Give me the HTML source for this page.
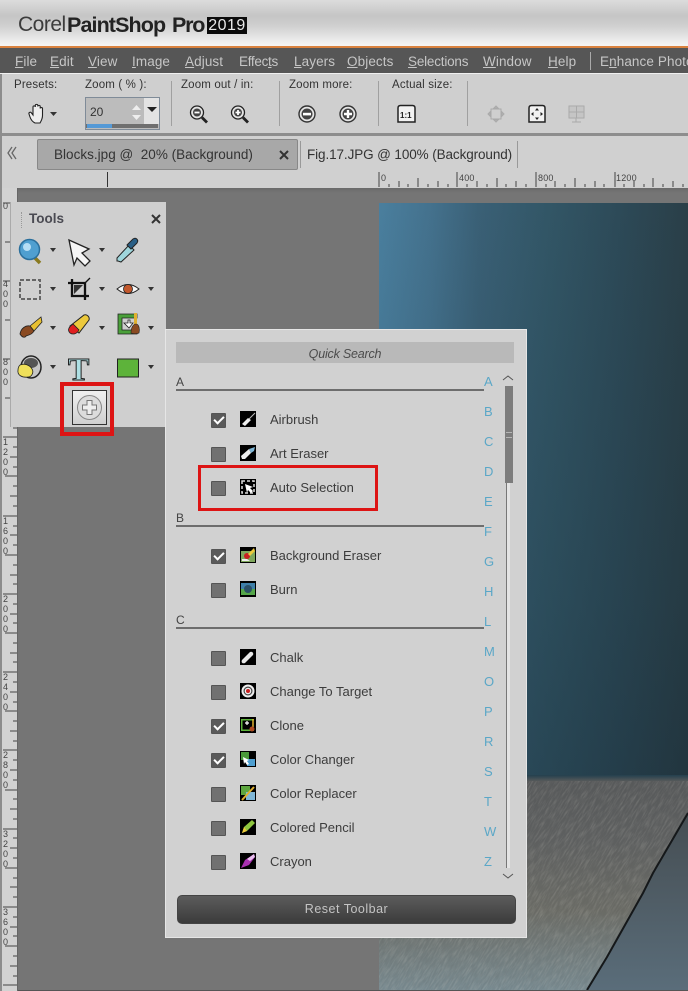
<!DOCTYPE html>
<html><head><meta charset="utf-8"><style>
html,body{margin:0;padding:0;width:688px;height:991px;overflow:hidden;background:#757575}
body{position:relative;font-family:"Liberation Sans",sans-serif;color:#3a3a3a}
.a{position:absolute}
.t{position:absolute;white-space:nowrap;line-height:18px}
.m{color:#c6c6c6;font-size:13.5px;top:53px;letter-spacing:.1px}
.l{font-size:11.5px;top:76px;color:#333;letter-spacing:.15px}
.sep{position:absolute;width:1px;top:81px;height:45px;background:#a0a0a0}
.i{font-size:13px;left:270px;letter-spacing:0;color:#3c3c3c}
.h{font-size:12px;left:176px;color:#444}
.az{font-size:13px;color:#5ba7c7;left:484px}
.c{position:absolute;left:211px;width:13px;height:13px;border:1px solid #555;background:#717171;border-radius:1px}
.c.on{background:#5a5a5a}
.c.on::after{content:"";position:absolute;left:2px;top:2px;width:8px;height:4px;border-left:2px solid #fff;border-bottom:2px solid #fff;transform:rotate(-45deg)}
.ic{position:absolute;left:240px;width:16px;height:16px;background:#000;overflow:hidden}
.ar{position:absolute;width:0;height:0;border-left:3.5px solid transparent;border-right:3.5px solid transparent;border-top:4px solid #333}
.ln{position:absolute;left:176px;width:308px;height:2px;background:#6d6d6d}
svg{position:absolute;overflow:visible}
</style></head><body>

<!-- header -->
<div class="a" style="left:0;top:0;width:688px;height:46px;background:linear-gradient(#dcdcdc 0,#c5c5c5 16px,#d0d0d0 26px,#f4f4f4 45px)"></div>
<div class="t" style="left:18px;top:12px;font-size:21px;line-height:26px;color:#3c3c3c;letter-spacing:-.5px">Corel</div>
<div class="t" style="left:67px;top:12px;font-size:21.5px;line-height:26px;font-weight:bold;color:#222;letter-spacing:-.9px">PaintShop</div>
<div class="t" style="left:172px;top:12px;font-size:21.5px;line-height:26px;font-weight:bold;color:#222;letter-spacing:-1.2px">Pro</div>
<div class="t" style="left:207px;top:17px;width:40px;height:17px;background:#0c0c0c;color:#e8e8e8;font-size:16px;line-height:17px;text-align:center;letter-spacing:.5px">2019</div>
<div class="a" style="left:0;top:46px;width:688px;height:2px;background:#d9823f"></div>

<!-- menu -->
<div class="a" style="left:0;top:48px;width:688px;height:25px;background:#565656"></div>
<div class="a" style="left:0;top:73px;width:688px;height:1px;background:#f0f0f0"></div>
<div class="t m" style="left:15px"><u>F</u>ile</div>
<div class="t m" style="left:50px"><u>E</u>dit</div>
<div class="t m" style="left:88px"><u>V</u>iew</div>
<div class="t m" style="left:132px"><u>I</u>mage</div>
<div class="t m" style="left:185px"><u>A</u>djust</div>
<div class="t m" style="left:239px;letter-spacing:-.3px">Effec<u>t</u>s</div>
<div class="t m" style="left:294px"><u>L</u>ayers</div>
<div class="t m" style="left:347px"><u>O</u>bjects</div>
<div class="t m" style="left:408px;letter-spacing:-.2px"><u>S</u>elections</div>
<div class="t m" style="left:483px"><u>W</u>indow</div>
<div class="t m" style="left:548px"><u>H</u>elp</div>
<div class="a" style="left:590px;top:52px;width:1px;height:18px;background:#aaa"></div>
<div class="t m" style="left:600px">E<u>n</u>hance Photo</div>

<!-- toolbar -->
<div class="a" style="left:0;top:74px;width:688px;height:59px;background:#cfcfcf"></div>
<div class="a" style="left:0;top:133px;width:688px;height:3px;background:#8d8d8d"></div>
<div class="a" style="left:0;top:136px;width:688px;height:52px;background:#d0d0d0"></div>
<div class="a" style="left:0;top:74px;width:2px;height:917px;background:#8c8c8c"></div>
<div class="t l" style="left:14px">Presets:</div>
<div class="t l" style="left:85px">Zoom ( % ):</div>
<div class="t l" style="left:181px">Zoom out / in:</div>
<div class="t l" style="left:289px">Zoom more:</div>
<div class="t l" style="left:392px">Actual size:</div>
<div class="sep" style="left:171px"></div>
<div class="sep" style="left:279px"></div>
<div class="sep" style="left:378px"></div>
<div class="sep" style="left:467px"></div>
<svg style="left:0;top:0" width="688" height="135">
 <path d="M35 123c-2-1-4-3-5-6l-1-3c-.5-1.500 1.500-2.500 2.500-1l1.500 2v-8c0-1.500 2.300-1.500 2.300 0v-1.500c0-1.500 2.500-1.500 2.500 0v1c0-1.500 2.400-1.500 2.400 0v2c0-1.300 2.300-1.300 2.300 0v7c0 3-1 5-2.500 7.500z" fill="#eee" stroke="#222" stroke-width="1.100"/>
 <path d="M50 112h7l-3.500 4z" fill="#333"/>
 <g fill="none" stroke="#222">
  <circle cx="197" cy="112.500" r="6.500" fill="#e4e4e4" stroke-width="1.300"/><path d="M202 117.500l5 5" stroke-width="2.800"/>
  <circle cx="238" cy="112.500" r="6.500" fill="#e4e4e4" stroke-width="1.300"/><path d="M243 117.500l5 5" stroke-width="2.800"/>
 </g>
 <circle cx="197" cy="112.500" r="4" fill="#444"/><circle cx="238" cy="112.500" r="4" fill="#444"/>
 <path d="M194.500 112.500h5" stroke="#fff" stroke-width="1.800"/><path d="M235.500 112.500h5M238 110v5" stroke="#fff" stroke-width="1.800"/>
 <circle cx="307" cy="114" r="8" fill="#e6e6e6" stroke="#333" stroke-width="1.400"/><circle cx="307" cy="114" r="5.500" fill="#444"/><rect x="303" y="112.800" width="8" height="2.600" fill="#fff"/>
 <circle cx="348" cy="114" r="8" fill="#e6e6e6" stroke="#333" stroke-width="1.400"/><circle cx="348" cy="114" r="5.500" fill="#444"/><path d="M344 114h8M348 110v8" stroke="#fff" stroke-width="2.400"/>
 <path d="M398 122v-14q0-2.500 2.500-2.500h12q2.500 0 2.500 2.500v14z" fill="#f2f2f2" stroke="#222" stroke-width="1.500"/>
 <text x="400" y="118" font-size="8" font-weight="bold" fill="#222" font-family="Liberation Sans">1:1</text>
 <g stroke="#aaa" fill="#bbb"><rect x="491" y="109" width="10" height="10" fill="none"/><path d="M496 106l-2 2h4zM496 122l-2-2h4zM488 114l2-2v4zM504 114l-2-2v4z"/></g>
 <path d="M529 122v-14q0-2.500 2.500-2.500h11q2.500 0 2.500 2.500v14z" fill="#f2f2f2" stroke="#222" stroke-width="1.500"/>
 <path d="M537 108l-2 2.500h4zM537 120l-2-2.500h4zM531 114l2.500-2v4zM543 114l-2.500-2v4z" fill="#222"/>
 <g stroke="#aaa" fill="none"><rect x="569" y="106" width="15" height="12" fill="#c5c5c5"/><path d="M576.500 106v12M569 112h15M576 118v4M572 122h9"/></g>
</svg>

<!-- zoom spin -->
<div class="a" style="left:85px;top:97px;width:73px;height:31px;background:#bcbcbc;border:1px solid #7f8b98;box-sizing:content-box"></div>
<div class="a" style="left:144px;top:98px;width:15px;height:26px;background:#e3e3e3"></div>
<div class="a" style="left:86px;top:124px;width:72px;height:4px;background:#6f6f6f"></div>
<div class="a" style="left:87px;top:124px;width:25px;height:4px;background:#5499d6"></div>
<div class="t" style="left:90px;top:103px;font-size:12px;color:#333">20</div>
<svg style="left:0;top:0" width="170" height="130"><path d="M132 110l4.500-5 4.500 5zM132 115l4.500 5 4.500-5z" fill="#eee"/><path d="M147 107h10l-5 5z" fill="#222"/></svg>

<!-- tabs -->
<svg style="left:7px;top:146px" width="10" height="14"><path d="M5 1L1 7l4 6M9 1L5 7l4 6" fill="none" stroke="#666" stroke-width="1.300"/></svg>
<div class="a" style="left:37px;top:139px;width:259px;height:29px;background:#a8a8a8;border:1px solid #888;border-radius:2px"></div>
<div class="t" style="left:54px;top:146px;font-size:13.5px;color:#333;letter-spacing:.02px;white-space:pre">Blocks.jpg @  20% (Background)</div>
<svg style="left:279px;top:150px" width="10" height="10"><path d="M1 1l8 8M9 1l-8 8" stroke="#333" stroke-width="2"/></svg>
<div class="a" style="left:300px;top:141px;width:1px;height:27px;background:#999"></div>
<div class="t" style="left:307px;top:146px;font-size:13.5px;color:#333;letter-spacing:-.1px">Fig.17.JPG @ 100% (Background)</div>
<div class="a" style="left:517px;top:141px;width:1px;height:27px;background:#999"></div>
<div class="a" style="left:107px;top:172px;width:1px;height:15px;background:#333"></div>

<!-- top ruler -->
<svg style="left:0;top:0" width="688" height="188">
 <path d="M379 172v15M389 184v3M399 181v6M408 184v3M418 178v9M428 184v3M438 181v6M448 184v3M457 172v15M467 184v3M477 181v6M487 184v3M497 178v9M506 184v3M516 181v6M526 184v3M536 172v15M546 184v3M555 181v6M565 184v3M575 178v9M585 184v3M595 181v6M604 184v3M615 172v15M624 184v3M634 181v6M644 184v3M653 178v9M663 184v3M673 181v6M683 184v3" stroke="#444" stroke-width="1" fill="none"/>
 <g font-family="Liberation Sans" font-size="9" fill="#444" letter-spacing=".2"><text x="381" y="181">0</text><text x="459" y="181">400</text><text x="538" y="181">800</text><text x="616" y="181">1200</text></g>
</svg>

<!-- canvas -->
<div class="a" style="left:18px;top:188px;width:670px;height:803px;background:linear-gradient(#6a6a6a,#757575 5px)"></div>

<!-- left ruler -->
<div class="a" style="left:2px;top:188px;width:16px;height:803px;background:#d2d2d2;border-right:1px solid #666;box-sizing:border-box"></div>
<svg style="left:0;top:0" width="18" height="991">
 <path d="M3 203h14M13 213h4M10 223h7M13 232h4M5 242h12M13 252h4M10 262h7M13 271h4M3 281h14M13 291h4M10 301h7M13 311h4M5 320h12M13 330h4M10 340h7M13 350h4M3 359h14M13 369h4M10 379h7M13 389h4M5 398h12M13 408h4M10 418h7M13 428h4M3 437h14M13 447h4M10 457h7M13 467h4M5 476h12M13 486h4M10 496h7M13 506h4M3 516h14M13 526h4M10 535h7M13 545h4M5 555h12M13 565h4M10 575h7M13 584h4M3 594h14M13 604h4M10 614h7M13 623h4M5 633h12M13 643h4M10 653h7M13 662h4M3 672h14M13 682h4M10 692h7M13 702h4M5 711h12M13 721h4M10 731h7M13 741h4M3 750h14M13 760h4M10 770h7M13 780h4M5 790h12M13 799h4M10 809h7M13 819h4M3 829h14M13 838h4M10 848h7M13 858h4M5 868h12M13 878h4M10 887h7M13 897h4M3 907h14M13 917h4M10 927h7M13 936h4M5 946h12M13 956h4M10 966h7M13 976h4M3 985h14" stroke="#444" stroke-width="1" fill="none"/>
 <g font-family="Liberation Sans" font-size="9" fill="#444">
  <text x="3" y="209">0</text>
  <text x="3" y="287">4</text><text x="3" y="297">0</text><text x="3" y="307">0</text>
  <text x="3" y="365">8</text><text x="3" y="375">0</text><text x="3" y="385">0</text>
  <text x="3" y="445">1</text><text x="3" y="455">2</text><text x="3" y="465">0</text><text x="3" y="475">0</text>
  <text x="3" y="524">1</text><text x="3" y="534">6</text><text x="3" y="544">0</text><text x="3" y="554">0</text>
  <text x="3" y="602">2</text><text x="3" y="612">0</text><text x="3" y="622">0</text><text x="3" y="632">0</text>
  <text x="3" y="680">2</text><text x="3" y="690">4</text><text x="3" y="700">0</text><text x="3" y="710">0</text>
  <text x="3" y="758">2</text><text x="3" y="768">8</text><text x="3" y="778">0</text><text x="3" y="788">0</text>
  <text x="3" y="837">3</text><text x="3" y="847">2</text><text x="3" y="857">0</text><text x="3" y="867">0</text>
  <text x="3" y="915">3</text><text x="3" y="925">6</text><text x="3" y="935">0</text><text x="3" y="945">0</text>
 </g>
</svg>

<!-- photo -->
<div class="a" style="left:379px;top:203px;width:309px;height:575px;background:linear-gradient(rgba(20,40,50,0) 0,rgba(20,40,50,.22) 400px,rgba(15,30,40,.3) 575px),linear-gradient(90deg,#4a7f9e 0,#44728e 50px,#3a6076 100px,#325666 170px,#2d4a58 240px,#2a3f48 309px)"></div>
<div class="a" style="left:379px;top:775px;width:309px;height:6px;background:linear-gradient(#24404e,#55595a)"></div>
<div class="a" style="left:379px;top:781px;width:309px;height:209px;overflow:hidden;background:linear-gradient(#57595a 0,#5e6060 60px,#6b6c66 130px,#788a90 209px)">
 <svg style="left:0;top:0;overflow:hidden" width="309" height="209" viewBox="0 3 309 209">
  <defs>
   <linearGradient id="bd" x1="0" y1="0" x2="0" y2="1"><stop offset="0" stop-color="#454d52"/><stop offset="1" stop-color="#5a6d7a"/></linearGradient>
   <filter id="gr" x="0" y="0" width="100%" height="100%"><feTurbulence type="fractalNoise" baseFrequency=".09 .6" numOctaves="3" seed="4" stitchTiles="stitch"/><feColorMatrix type="matrix" values="0 0 0 0 .85  0 0 0 0 .82  0 0 0 0 .75  1.800 0 0 0 -.75"/></filter>
   <filter id="gd" x="0" y="0" width="100%" height="100%"><feTurbulence type="fractalNoise" baseFrequency=".12 .7" numOctaves="3" seed="9" stitchTiles="stitch"/><feColorMatrix type="matrix" values="0 0 0 0 .1  0 0 0 0 .1  0 0 0 0 .1  1.800 0 0 0 -.7"/></filter>
   <pattern id="pg" width="400" height="400" patternUnits="userSpaceOnUse" patternTransform="rotate(-58)"><rect width="400" height="400" filter="url(#gr)"/></pattern>
   <pattern id="pd" width="400" height="400" patternUnits="userSpaceOnUse" patternTransform="rotate(-58)"><rect width="400" height="400" filter="url(#gd)"/></pattern>
  </defs>
  <rect x="0" y="3" width="309" height="209" fill="url(#pg)" opacity=".2"/>
  <rect x="0" y="3" width="309" height="209" fill="url(#pd)" opacity=".18"/>
  <path d="M309 34L309 212H209L300 50Z" fill="url(#bd)"/>
  <path d="M309 35L274 95L264 115L228 179L208 212" stroke="#15181a" stroke-width="2" fill="none"/>
 </svg>
</div>
<div class="a" style="left:18px;top:990px;width:670px;height:1px;background:#555"></div>

<!-- tools panel -->
<div class="a" style="left:10px;top:202px;width:156px;height:225px;background:#cfcfcf;border-left:1px solid #aaa;box-sizing:border-box"></div>
<div class="a" style="left:21px;top:212px;width:2px;height:16px;border-left:1px dotted #999"></div>
<div class="t" style="left:29px;top:210px;font-size:13.5px;font-weight:bold;color:#4a4a52">Tools</div>
<svg style="left:151px;top:214px" width="10" height="10"><path d="M1 1l8 8M9 1l-8 8" stroke="#333" stroke-width="2"/></svg>
<svg style="left:0;top:195px" width="170" height="240">
 <!-- magnifier -->
 <path d="M33 61l7 7" stroke="#8a7a20" stroke-width="3.500"/>
 <circle cx="29.500" cy="54.500" r="10" fill="#4f9fd0" stroke="#2a6f9c" stroke-width="1.500"/><circle cx="27" cy="52" r="4" fill="#b5def5"/>
 <!-- arrow -->
 <path d="M69 45l20 9-7 4 8 8-5 5-8-8-3 7z" fill="#f5f5f5" stroke="#222" stroke-width="1.300"/>
 <!-- dropper -->
 <path d="M118 66l-1 0 0-3 12-13 5 5-13 12z" fill="#9fd6dc" stroke="#222"/><path d="M127 50l6-6c3-2 6 1 4 4l-6 6z" fill="#2a5f86" stroke="#222"/>
 <!-- selection -->
 <rect x="20" y="85" width="20" height="19" fill="none" stroke="#666" stroke-width="2" stroke-dasharray="4 2"/>
 <!-- crop -->
 <path d="M72 84v17h17M68 88h17v17" fill="none" stroke="#111" stroke-width="2.300"/><path d="M85 88l5-5" stroke="#111" stroke-width="1.300"/><path d="M74 99V90h9z" fill="#333"/>
 <!-- eye -->
 <path d="M117 94q11-9 22 0q-11 9-22 0z" fill="#f8f8f8" stroke="#222"/><circle cx="128" cy="94" r="4.500" fill="#c2582c" stroke="#222" stroke-width=".8"/>
 <!-- brush -->
 <path d="M30 131l11-9 1 5-8 9z" fill="#e8c030" stroke="#222" stroke-width=".8"/><path d="M20 139c1-6 6-9 10-8l4 5c-2 4-6 4-8 5 0 1-3 3-6-2z" fill="#8a4a22" stroke="#222" stroke-width=".8"/>
 <!-- eraser -->
 <path d="M70 131l14-11c3-1 6 2 5 5l-10 13z" fill="#ecc93c" stroke="#222"/><path d="M69 133c2-3 3-3 4-4l6 6c-2 4-6 5-9 3-1-1-2-3-1-5z" fill="#e02020" stroke="#222" stroke-width=".8"/>
 <!-- clone -->
 <path d="M118 119h19v4h-15v12h15v4h-19z" fill="#4aa03a" stroke="#222" stroke-width=".8"/>
 <path d="M124 128h4v-3h2v3h3l-4 5z" fill="#fff" stroke="#222" stroke-width=".8"/>
 <path d="M134 118h3v12h-3z" fill="#e0b030"/><path d="M131 138c0-5 2-9 5-9s4 5 3 9c-2 1-6 1-8 0z" fill="#8a4a22" stroke="#222" stroke-width=".6"/>
 <!-- fill -->
 <ellipse cx="31" cy="172" rx="10" ry="11" fill="#c7c7c7" stroke="#222" stroke-width="1.500"/><ellipse cx="31" cy="168" rx="7" ry="5" fill="#555"/>
 <path d="M20 170c4-2 10 0 12 4 2 3 0 8-4 8-6 1-11-2-10-7 0-2 1-4 2-5z" fill="#efe05a" stroke="#222" stroke-width=".8"/>
 <!-- T -->
 <text x="68" y="185" font-family="Liberation Serif" font-size="32" font-weight="bold" fill="#aee0e4" stroke="#222" stroke-width="1">T</text>
 <!-- rect -->
 <rect x="117.500" y="164" width="21" height="18" fill="#5db33a" stroke="#222" stroke-width="1"/>
</svg>
<div class="ar" style="left:50px;top:248px"></div><div class="ar" style="left:99px;top:248px"></div>
<div class="ar" style="left:50px;top:287px"></div><div class="ar" style="left:99px;top:287px"></div><div class="ar" style="left:148px;top:287px"></div>
<div class="ar" style="left:50px;top:326px"></div><div class="ar" style="left:99px;top:326px"></div><div class="ar" style="left:148px;top:326px"></div>
<div class="ar" style="left:50px;top:365px"></div><div class="ar" style="left:148px;top:365px"></div>

<!-- plus button -->
<div class="a" style="left:72px;top:390px;width:33px;height:33px;background:linear-gradient(#f0f0f0,#d0d0d0);border:1px solid #333"></div>
<svg style="left:72px;top:390px" width="35" height="35"><circle cx="17.500" cy="17.500" r="12" fill="#dcdcdc" stroke="#888"/><path d="M15 10.500h5v4.500h4.500v5H20v4.500h-5V20h-4.500v-5H15z" fill="#eee" stroke="#777"/></svg>
<div class="a" style="left:60px;top:382px;width:54px;height:54px;border:4px solid #dd1414;box-sizing:border-box"></div>

<!-- popup -->
<div class="a" style="left:165px;top:329px;width:362px;height:609px;background:#d1d1d1;border:1px solid #e6e6e6;box-sizing:border-box"></div>
<div class="a" style="left:176px;top:342px;width:338px;height:21px;background:#b9b9b9"></div>
<div class="t" style="left:176px;top:345px;width:338px;text-align:center;font-size:12.5px;font-style:italic;color:#4c4c4c;letter-spacing:-.2px">Quick Search</div>

<div class="t h" style="top:373px">A</div><div class="ln" style="top:389px"></div>
<div class="t h" style="top:509px">B</div><div class="ln" style="top:525px"></div>
<div class="t h" style="top:611px">C</div><div class="ln" style="top:627px"></div>

<div class="c on" style="top:413px"></div><div class="t i" style="top:411px">Airbrush</div>
<div class="c" style="top:447px"></div><div class="t i" style="top:445px">Art Eraser</div>
<div class="c" style="top:481px"></div><div class="t i" style="top:479px">Auto Selection</div>
<div class="c on" style="top:549px"></div><div class="t i" style="top:547px">Background Eraser</div>
<div class="c" style="top:583px"></div><div class="t i" style="top:581px">Burn</div>
<div class="c" style="top:651px"></div><div class="t i" style="top:649px">Chalk</div>
<div class="c" style="top:685px"></div><div class="t i" style="top:683px">Change To Target</div>
<div class="c on" style="top:719px"></div><div class="t i" style="top:717px">Clone</div>
<div class="c on" style="top:753px"></div><div class="t i" style="top:751px">Color Changer</div>
<div class="c" style="top:787px"></div><div class="t i" style="top:785px">Color Replacer</div>
<div class="c" style="top:821px"></div><div class="t i" style="top:819px">Colored Pencil</div>
<div class="c" style="top:855px"></div><div class="t i" style="top:853px">Crayon</div>

<!-- list icons -->
<div class="ic" style="top:411px"><svg width="16" height="16"><path d="M2 13l6-6 3 2-6 6z" fill="#eee"/><path d="M9 8l6-6" stroke="#bbb"/></svg></div>
<div class="ic" style="top:445px"><svg width="16" height="16"><path d="M1 11l8-7 2 4-6 6H2z" fill="#eee"/><path d="M9 4l6-2-1 4-3 2z" fill="#7fb6d6"/></svg></div>
<div class="ic" style="top:479px"><svg width="16" height="16"><rect x="2" y="2" width="12" height="12" fill="none" stroke="#ddd" stroke-width="1.500" stroke-dasharray="3 2"/><path d="M5 5l8 3-3 1 3 3-2 2-3-3-1 3z" fill="#fff"/></svg></div>
<div class="ic" style="top:547px"><svg width="16" height="16"><rect x="1" y="4" width="14" height="11" fill="#7fa75c"/><circle cx="7" cy="9" r="3" fill="#c92020"/><path d="M8 7l6-6 1 3-5 5z" fill="#ecc93c"/><path d="M2 12h5l3 2H2z" fill="#eee"/></svg></div>
<div class="ic" style="top:581px"><svg width="16" height="16"><rect x="1" y="2" width="14" height="6" fill="#3f7fa8"/><rect x="1" y="8" width="14" height="6" fill="#55a64a"/><circle cx="8" cy="8" r="4" fill="#2b4f66"/></svg></div>
<div class="ic" style="top:649px"><svg width="16" height="16"><path d="M2 11l8-8c2-1 4 1 3 3l-8 8c-3 1-4-1-3-3z" fill="#e8e8e8"/></svg></div>
<div class="ic" style="top:683px"><svg width="16" height="16"><circle cx="8" cy="8" r="6.500" fill="#eee"/><circle cx="8" cy="8" r="4.500" fill="#444"/><circle cx="8" cy="8" r="3.300" fill="#eee"/><circle cx="8" cy="8" r="2" fill="#c92020"/></svg></div>
<div class="ic" style="top:717px"><svg width="16" height="16"><path d="M1 2h13v1.500H2.500v9H14V14H1z" fill="#5db33a"/><path d="M5 6h4M7 4v4" stroke="#fff" stroke-width="1.200"/><path d="M13 2v8" stroke="#e0b030" stroke-width="1.500"/><circle cx="12" cy="12" r="2.500" fill="#b04a22"/></svg></div>
<div class="ic" style="top:751px"><svg width="16" height="16"><rect x="1" y="1" width="8" height="8" fill="#4a9a3a"/><rect x="7" y="8" width="8" height="7" fill="#4f9fd0"/><path d="M3 6l6 3-2 1 2 3-2 1-2-3-1 2z" fill="#fff"/></svg></div>
<div class="ic" style="top:785px"><svg width="16" height="16"><rect x="1" y="1" width="9" height="9" fill="#5da63f"/><rect x="6" y="7" width="9" height="8" fill="#7fb6d6"/><path d="M2 15L14 2" stroke="#e0b030" stroke-width="2"/></svg></div>
<div class="ic" style="top:819px"><svg width="16" height="16"><path d="M2 14l2-6 8-7 3 3-8 8z" fill="#8ec63f"/><path d="M2 14l2-6 3 4z" fill="#ecc93c"/></svg></div>
<div class="ic" style="top:853px"><svg width="16" height="16"><path d="M1 15l4-8 9-6 1 3-6 8z" fill="#a830b0"/><path d="M7 6l7-5 1 3-5 4z" fill="#e8c0ee"/></svg></div>

<!-- alphabet -->
<div class="t az" style="top:373px">A</div><div class="t az" style="top:403px">B</div><div class="t az" style="top:433px">C</div><div class="t az" style="top:463px">D</div><div class="t az" style="top:493px">E</div><div class="t az" style="top:523px">F</div><div class="t az" style="top:553px">G</div><div class="t az" style="top:583px">H</div><div class="t az" style="top:613px">L</div><div class="t az" style="top:643px">M</div><div class="t az" style="top:673px">O</div><div class="t az" style="top:703px">P</div><div class="t az" style="top:733px">R</div><div class="t az" style="top:763px">S</div><div class="t az" style="top:793px">T</div><div class="t az" style="top:823px">W</div><div class="t az" style="top:853px">Z</div>

<!-- scrollbar -->
<div class="a" style="left:506px;top:386px;width:1px;height:482px;background:#777"></div>
<div class="a" style="left:507px;top:386px;width:3px;height:482px;background:#e4e4e4"></div>
<div class="a" style="left:505px;top:386px;width:8px;height:97px;background:#7c7c7c"></div>
<div class="a" style="left:506px;top:432px;width:6px;height:6px;border-top:1px solid #b5b5b5;border-bottom:1px solid #b5b5b5;box-sizing:border-box"></div>
<svg style="left:502px;top:375px" width="12" height="6"><path d="M1 5l5-4 5 4" fill="none" stroke="#555"/></svg>
<svg style="left:502px;top:873px" width="12" height="6"><path d="M1 1l5 4 5-4" fill="none" stroke="#555"/></svg>

<!-- reset -->
<div class="a" style="left:177px;top:895px;width:339px;height:29px;border-radius:5px;background:linear-gradient(#5c5c5c,#3b3b3b);border:1px solid #444;box-sizing:border-box"></div>
<div class="t" style="left:177px;top:900px;width:339px;text-align:center;font-size:12.5px;color:#c4c4c4;letter-spacing:.5px">Reset Toolbar</div>

<!-- red box -->
<div class="a" style="left:198px;top:465px;width:180px;height:46px;border:3.500px solid #dd1414;box-sizing:border-box"></div>

</body></html>
